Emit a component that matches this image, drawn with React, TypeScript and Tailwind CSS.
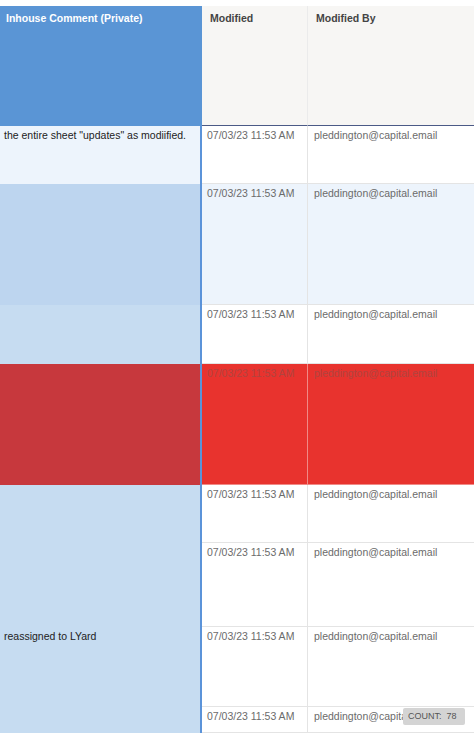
import React from "react";

type Row = {
  height: number;
  comment?: string;
  leftBg: string;
  rightBg: string;
  danger?: boolean;
};

const rows: Row[] = [
  { height: 58, comment: 'the entire sheet "updates" as modiified.', leftBg: "bg-[#edf4fc]", rightBg: "bg-white" },
  { height: 121, leftBg: "bg-[#bdd5ef]", rightBg: "bg-[#edf4fc]" },
  { height: 59, leftBg: "bg-[#c6dcf1]", rightBg: "bg-white" },
  { height: 121, leftBg: "bg-[#c7383d]", rightBg: "bg-[#e8332e]", danger: true },
  { height: 58, leftBg: "bg-[#c6dcf1]", rightBg: "bg-white" },
  { height: 84, leftBg: "bg-[#c6dcf1]", rightBg: "bg-white" },
  { height: 80, comment: "reassigned to LYard", leftBg: "bg-[#c6dcf1]", rightBg: "bg-white" },
  { height: 26, leftBg: "bg-[#c6dcf1]", rightBg: "bg-white" },
];

function App() {
  return (
    <div className="relative w-[474px] h-[737px] overflow-hidden bg-white font-['Liberation_Sans',Arial,sans-serif]">
      <div className="h-[6px]" />
      {/* header */}
      <div className="flex h-[120px]">
        <div className="w-[200px] bg-[#5a95d5] px-[6px] pt-[5px] text-[10.5px] leading-[14px] font-bold text-white">
          Inhouse Comment (Private)
        </div>
        <div className="w-[2px] bg-[#5a95d5]" />
        <div className="w-[106px] bg-[#f7f6f4] border-b border-[#4b5a86] border-r border-r-[#ebebeb] px-[8px] pt-[5px] text-[10.5px] leading-[14px] font-bold text-[#444]">
          Modified
        </div>
        <div className="flex-1 bg-[#f7f6f4] border-b border-[#4b5a86] px-[8px] pt-[5px] text-[10.5px] leading-[14px] font-bold text-[#444]">
          Modified By
        </div>
      </div>

      {rows.map((row, i) => (
        <div key={i} className="flex" style={{ height: row.height }}>
          <div className={`w-[200px] ${row.leftBg} px-[4px] pt-[2px] text-[10.5px] leading-[14px] text-[#222]`}>
            {row.comment}
          </div>
          <div className="w-[2px] bg-[#5b93d9]" />
          <div
            className={`w-[106px] ${row.rightBg} border-b border-r px-[5px] pt-[2px] text-[10.5px] leading-[14px] whitespace-nowrap ${
              row.danger ? "border-[#f08a86] text-[#b0443f]" : "border-[#e4e4e4] text-[#6b6b6b]"
            }`}
          >
            07/03/23 11:53 AM
          </div>
          <div
            className={`flex-1 ${row.rightBg} border-b px-[6px] pt-[2px] text-[10.5px] leading-[14px] whitespace-nowrap ${
              row.danger ? "border-[#f08a86] text-[#b0443f]" : "border-[#e4e4e4] text-[#6b6b6b]"
            }`}
          >
            pleddington@capital.email
          </div>
        </div>
      ))}

      <div className="absolute left-[403px] top-[708px] w-[62px] h-[17px] rounded-[2px] bg-[#d4d4d4] flex items-center pl-[5px] text-[9px] text-[#555]">
        COUNT:&nbsp; 78
      </div>
    </div>
  );
}

export default App;
